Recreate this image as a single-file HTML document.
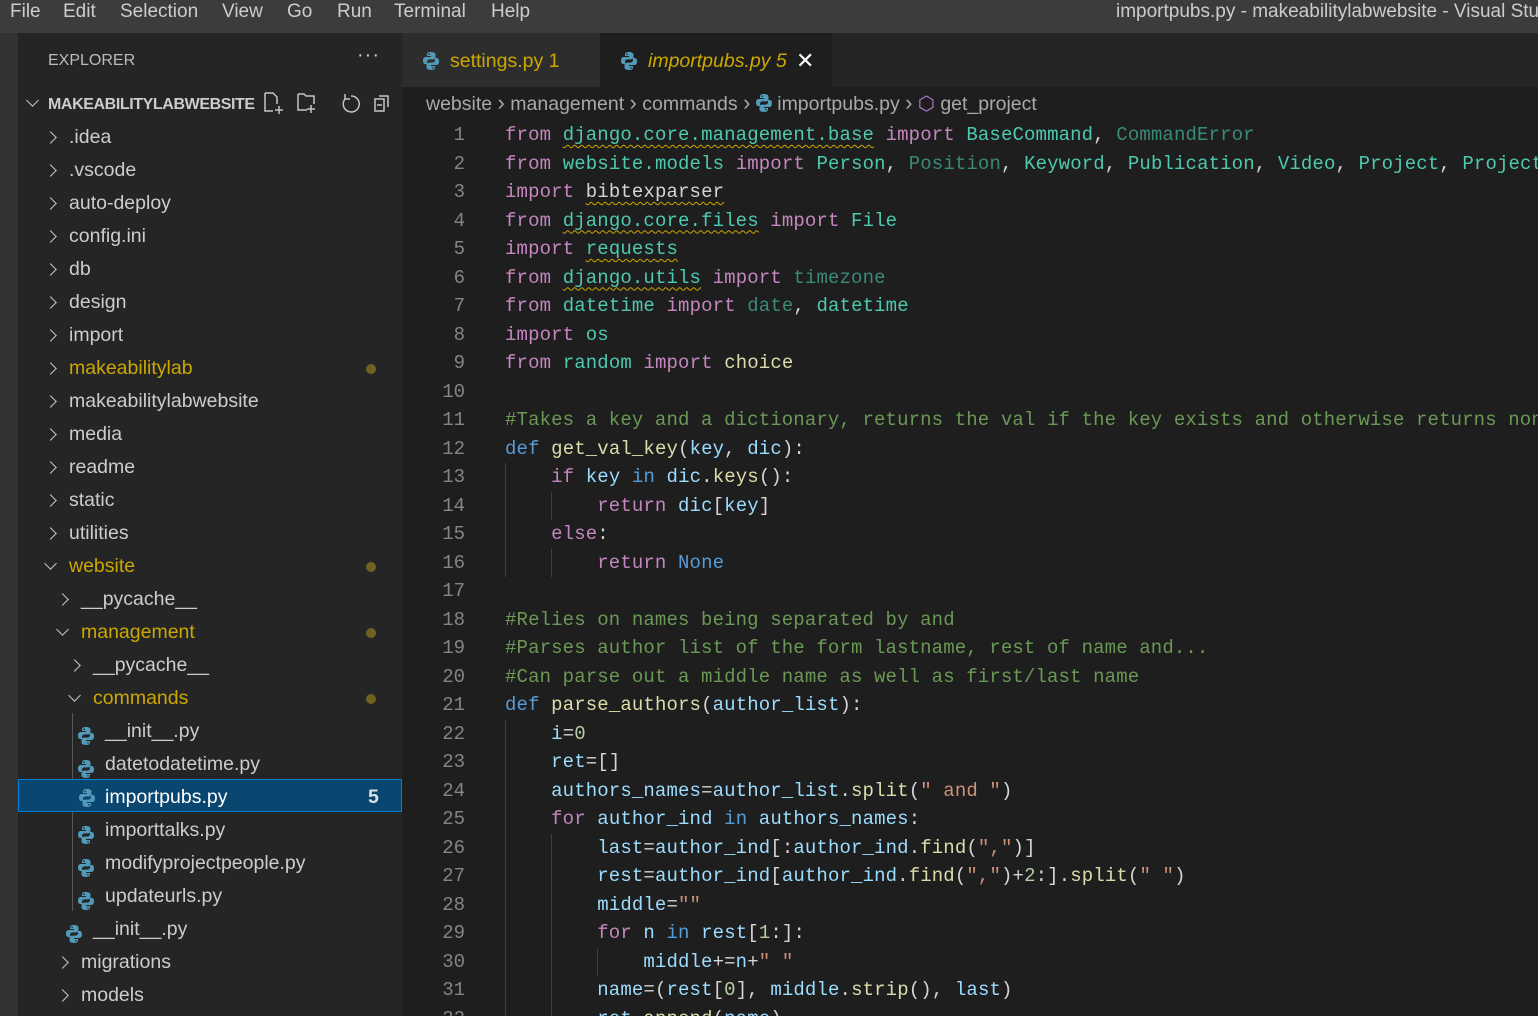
<!DOCTYPE html>
<html style="overflow:hidden;width:1538px;height:1016px"><head><meta charset="utf-8"><style>
*{margin:0;padding:0;box-sizing:border-box}
body{width:1538px;height:1016px;overflow:hidden;background:#1e1e1e;font-family:"Liberation Sans",sans-serif;position:relative}
.menu{position:absolute;left:0;top:0;width:1538px;height:33px;background:#3c3c3c;color:#ccc;font-size:19px;overflow:hidden}
.menu span{position:absolute;top:0;line-height:24px;white-space:nowrap}
.act{position:absolute;left:0;top:33px;width:18px;height:983px;background:#333}
.side{position:absolute;left:18px;top:33px;width:384px;height:983px;background:#252526;color:#ccc;overflow:hidden}
.row{position:absolute;left:0;width:384px;height:33px;line-height:33px;font-size:19.5px;white-space:nowrap}
.chev{position:absolute;top:12px;width:9px;height:9px;border-right:1.6px solid #c5c5c5;border-bottom:1.6px solid #c5c5c5;transform:rotate(-45deg)}
.chev.d{transform:rotate(45deg);top:9px}
.dot{position:absolute;left:348px;top:12px;width:10px;height:10px;border-radius:50%;background:#6f6220}
.y{color:#cca700}
.py{position:absolute;top:11px}
.tabs{position:absolute;left:402px;top:33px;width:1136px;height:54px;background:#252526;overflow:hidden}
.tab{position:absolute;top:0;height:54px;line-height:56px;font-size:19.5px;color:#cca700}
.crumb{position:absolute;left:426px;top:90px;font-size:19.5px;color:#a9a9a9;white-space:nowrap}
.code{position:absolute;left:0;top:121px;width:1538px;height:895px;overflow:hidden;font-family:"Liberation Mono",monospace;font-size:19px;letter-spacing:0.13px}
.ln{position:absolute;left:402px;width:63px;text-align:right;color:#858585;height:28.5px;line-height:28.5px;letter-spacing:0}
.cl{position:absolute;left:505px;height:28.5px;line-height:28.5px;white-space:pre;color:#d4d4d4}
.k{color:#c586c0}.m{color:#4ec9b0}.f{color:#dcdcaa}.v{color:#9cdcfe}.b{color:#569cd6}.c{color:#6a9955}.s{color:#ce9178}.n{color:#b5cea8}.u{color:#3a8a78}
.w{text-decoration:underline wavy #cca700;text-underline-offset:4px;text-decoration-thickness:1px}
.g{position:absolute;width:1px;background:#404040}
</style></head><body>
<div class="menu">
<span style="left:10px">File</span><span style="left:63px">Edit</span><span style="left:120px">Selection</span><span style="left:222px">View</span><span style="left:287px">Go</span><span style="left:337px">Run</span><span style="left:394px">Terminal</span><span style="left:491px">Help</span>
<span style="left:1116px">importpubs.py - makeabilitylabwebsite - Visual Studio Code</span>
</div>
<div class="act"></div>
<svg width="0" height="0" style="position:absolute"><defs><g id="pyi"><path d="M7.5 1c-3 0-3.5 1.3-3.5 2.6V5h4v1H2.6C1.2 6 0 7 0 9.6s1.1 3.4 2.5 3.4H4v-2c0-1.500 1.2-2.6 2.7-2.6h3.6c1.2 0 2.2-1 2.2-2.2V3.6C12.5 2 11 1 7.5 1z" fill="#519aba"/><path d="M8.5 19c3 0 3.5-1.3 3.5-2.6V15H8v-1h5.4c1.4 0 2.6-1 2.6-3.6S14.9 7 13.5 7H12v2c0 1.5-1.2 2.6-2.7 2.6H5.7c-1.2 0-2.200 1-2.2 2.2v2.6C3.5 18 5 19 8.5 19z" fill="#519aba"/><circle cx="6" cy="3.2" r=".8" fill="#252526"/><circle cx="10" cy="16.8" r=".8" fill="#252526"/></g></defs></svg>
<div class="side">
<div style="position:absolute;left:30px;top:19px;font-size:16px;color:#bbb">EXPLORER</div>
<div style="position:absolute;left:339px;top:11px;font-size:20px;color:#ccc;letter-spacing:1px">···</div>
<div class="row" style="top:55px;font-weight:bold;font-size:16px;letter-spacing:-0.4px"><span class="chev d" style="left:10px;top:8px"></span><span style="position:absolute;left:30px">MAKEABILITYLABWEBSITE</span>
<svg style="position:absolute;left:244px;top:3px" width="130" height="24" fill="none" stroke="#c5c5c5" stroke-width="1.5"><path d="M3 2h8l4 4v7M3 2v18h8M17 15v8M13 19h8"/><path d="M36 3h6l2 2h8v8M36 3v16h9M49 14v8M45 18h8"/><path d="M89 5a8 8 0 1 1-6 3M83 3v5h5"/><path d="M117 5h9v11M113 8h9v12h-9zM115 14h5"/></svg></div>
<div class="row" style="top:88px"><span class="chev" style="left:28px"></span><span style="position:absolute;left:51px">.idea</span></div>
<div class="row" style="top:121px"><span class="chev" style="left:28px"></span><span style="position:absolute;left:51px">.vscode</span></div>
<div class="row" style="top:154px"><span class="chev" style="left:28px"></span><span style="position:absolute;left:51px">auto-deploy</span></div>
<div class="row" style="top:187px"><span class="chev" style="left:28px"></span><span style="position:absolute;left:51px">config.ini</span></div>
<div class="row" style="top:220px"><span class="chev" style="left:28px"></span><span style="position:absolute;left:51px">db</span></div>
<div class="row" style="top:253px"><span class="chev" style="left:28px"></span><span style="position:absolute;left:51px">design</span></div>
<div class="row" style="top:286px"><span class="chev" style="left:28px"></span><span style="position:absolute;left:51px">import</span></div>
<div class="row y" style="top:319px"><span class="chev" style="left:28px"></span><span style="position:absolute;left:51px">makeabilitylab</span><span class="dot"></span></div>
<div class="row" style="top:352px"><span class="chev" style="left:28px"></span><span style="position:absolute;left:51px">makeabilitylabwebsite</span></div>
<div class="row" style="top:385px"><span class="chev" style="left:28px"></span><span style="position:absolute;left:51px">media</span></div>
<div class="row" style="top:418px"><span class="chev" style="left:28px"></span><span style="position:absolute;left:51px">readme</span></div>
<div class="row" style="top:451px"><span class="chev" style="left:28px"></span><span style="position:absolute;left:51px">static</span></div>
<div class="row" style="top:484px"><span class="chev" style="left:28px"></span><span style="position:absolute;left:51px">utilities</span></div>
<div class="row y" style="top:517px"><span class="chev d" style="left:28px"></span><span style="position:absolute;left:51px">website</span><span class="dot"></span></div>
<div class="row" style="top:550px"><span class="chev" style="left:40px"></span><span style="position:absolute;left:63px">__pycache__</span></div>
<div class="row y" style="top:583px"><span class="chev d" style="left:40px"></span><span style="position:absolute;left:63px">management</span><span class="dot"></span></div>
<div class="row" style="top:616px"><span class="chev" style="left:52px"></span><span style="position:absolute;left:75px">__pycache__</span></div>
<div class="row y" style="top:649px"><span class="chev d" style="left:52px"></span><span style="position:absolute;left:75px">commands</span><span class="dot"></span></div>
<div class="g" style="left:54px;top:680px;height:198px;background:#585858"></div>
<div class="row" style="top:682px"><svg class="py" style="left:60px" width="16" height="20"><use href="#pyi"/></svg><span style="position:absolute;left:87px">__init__.py</span></div>
<div class="row" style="top:715px"><svg class="py" style="left:60px" width="16" height="20"><use href="#pyi"/></svg><span style="position:absolute;left:87px">datetodatetime.py</span></div>
<div class="row" style="top:746px;background:#094771;border:1px solid #007fd4;color:#fff"><svg class="py" style="left:60px;top:8px" width="16" height="20"><use href="#pyi"/></svg><span style="position:absolute;left:86px;top:1px">importpubs.py</span><span style="position:absolute;left:349px;top:1px;font-weight:bold;color:#ddd">5</span></div>
<div class="row" style="top:781px"><svg class="py" style="left:60px" width="16" height="20"><use href="#pyi"/></svg><span style="position:absolute;left:87px">importtalks.py</span></div>
<div class="row" style="top:814px"><svg class="py" style="left:60px" width="16" height="20"><use href="#pyi"/></svg><span style="position:absolute;left:87px">modifyprojectpeople.py</span></div>
<div class="row" style="top:847px"><svg class="py" style="left:60px" width="16" height="20"><use href="#pyi"/></svg><span style="position:absolute;left:87px">updateurls.py</span></div>
<div class="row" style="top:880px"><svg class="py" style="left:48px" width="16" height="20"><use href="#pyi"/></svg><span style="position:absolute;left:75px">__init__.py</span></div>
<div class="row" style="top:913px"><span class="chev" style="left:40px"></span><span style="position:absolute;left:63px">migrations</span></div>
<div class="row" style="top:946px"><span class="chev" style="left:40px"></span><span style="position:absolute;left:63px">models</span></div>
</div>
<div class="tabs">
<div class="tab" style="left:0;width:198px;background:#2d2d2d"><svg style="position:absolute;left:21px;top:18px" width="16" height="20"><use href="#pyi"/></svg><span style="position:absolute;left:48px">settings.py 1</span></div>
<div class="tab" style="left:198px;width:232px;background:#1e1e1e;font-style:italic"><svg style="position:absolute;left:21px;top:18px" width="16" height="20"><use href="#pyi"/></svg><span style="position:absolute;left:48px">importpubs.py 5</span><span style="position:absolute;left:196px;font-style:normal;color:#fff;font-size:22px">✕</span></div>
</div>
<div class="crumb">website <span style="color:#aaa;font-size:22px">›</span> management <span style="color:#aaa;font-size:22px">›</span> commands <span style="color:#aaa;font-size:22px">›</span> <svg width="16" height="20" style="vertical-align:-3px"><use href="#pyi"/></svg> importpubs.py <span style="color:#aaa;font-size:22px">›</span> <span style="color:#b180d7">⬡</span> get_project</div>
<div class="g" style="left:505px;top:463px;height:114px"></div>
<div class="g" style="left:551px;top:492px;height:28px"></div>
<div class="g" style="left:551px;top:549px;height:28px"></div>
<div class="g" style="left:505px;top:720px;height:296px"></div>
<div class="g" style="left:551px;top:834px;height:182px"></div>
<div class="g" style="left:597px;top:948px;height:28px"></div>
<div class="code">
<div class="ln" style="top:0">1</div><div class="cl" style="top:0"><span class="k">from</span> <span class="m w">django.core.management.base</span> <span class="k">import</span> <span class="m">BaseCommand</span>, <span class="u">CommandError</span></div>
<div class="ln" style="top:28.5px">2</div><div class="cl" style="top:28.5px"><span class="k">from</span> <span class="m">website.models</span> <span class="k">import</span> <span class="m">Person</span>, <span class="u">Position</span>, <span class="m">Keyword</span>, <span class="m">Publication</span>, <span class="m">Video</span>, <span class="m">Project</span>, <span class="m">ProjectUmbrella</span></div>
<div class="ln" style="top:57px">3</div><div class="cl" style="top:57px"><span class="k">import</span> <span class="w">bibtexparser</span></div>
<div class="ln" style="top:85.5px">4</div><div class="cl" style="top:85.5px"><span class="k">from</span> <span class="m w">django.core.files</span> <span class="k">import</span> <span class="m">File</span></div>
<div class="ln" style="top:114px">5</div><div class="cl" style="top:114px"><span class="k">import</span> <span class="m w">requests</span></div>
<div class="ln" style="top:142.5px">6</div><div class="cl" style="top:142.5px"><span class="k">from</span> <span class="m w">django.utils</span> <span class="k">import</span> <span class="u">timezone</span></div>
<div class="ln" style="top:171px">7</div><div class="cl" style="top:171px"><span class="k">from</span> <span class="m">datetime</span> <span class="k">import</span> <span class="u">date</span>, <span class="m">datetime</span></div>
<div class="ln" style="top:199.5px">8</div><div class="cl" style="top:199.5px"><span class="k">import</span> <span class="m">os</span></div>
<div class="ln" style="top:228px">9</div><div class="cl" style="top:228px"><span class="k">from</span> <span class="m">random</span> <span class="k">import</span> <span class="f">choice</span></div>
<div class="ln" style="top:256.5px">10</div>
<div class="ln" style="top:285px">11</div><div class="cl c" style="top:285px">#Takes a key and a dictionary, returns the val if the key exists and otherwise returns none</div>
<div class="ln" style="top:313.5px">12</div><div class="cl" style="top:313.5px"><span class="b">def</span> <span class="f">get_val_key</span>(<span class="v">key</span>, <span class="v">dic</span>):</div>
<div class="ln" style="top:342px">13</div><div class="cl" style="top:342px">    <span class="k">if</span> <span class="v">key</span> <span class="b">in</span> <span class="v">dic</span>.<span class="f">keys</span>():</div>
<div class="ln" style="top:370.5px">14</div><div class="cl" style="top:370.5px">        <span class="k">return</span> <span class="v">dic</span>[<span class="v">key</span>]</div>
<div class="ln" style="top:399px">15</div><div class="cl" style="top:399px">    <span class="k">else</span>:</div>
<div class="ln" style="top:427.5px">16</div><div class="cl" style="top:427.5px">        <span class="k">return</span> <span class="b">None</span></div>
<div class="ln" style="top:456px">17</div>
<div class="ln" style="top:484.5px">18</div><div class="cl c" style="top:484.5px">#Relies on names being separated by and</div>
<div class="ln" style="top:513px">19</div><div class="cl c" style="top:513px">#Parses author list of the form lastname, rest of name and...</div>
<div class="ln" style="top:541.5px">20</div><div class="cl c" style="top:541.5px">#Can parse out a middle name as well as first/last name</div>
<div class="ln" style="top:570px">21</div><div class="cl" style="top:570px"><span class="b">def</span> <span class="f">parse_authors</span>(<span class="v">author_list</span>):</div>
<div class="ln" style="top:598.5px">22</div><div class="cl" style="top:598.5px">    <span class="v">i</span>=<span class="n">0</span></div>
<div class="ln" style="top:627px">23</div><div class="cl" style="top:627px">    <span class="v">ret</span>=[]</div>
<div class="ln" style="top:655.5px">24</div><div class="cl" style="top:655.5px">    <span class="v">authors_names</span>=<span class="v">author_list</span>.<span class="f">split</span>(<span class="s">" and "</span>)</div>
<div class="ln" style="top:684px">25</div><div class="cl" style="top:684px">    <span class="k">for</span> <span class="v">author_ind</span> <span class="b">in</span> <span class="v">authors_names</span>:</div>
<div class="ln" style="top:712.5px">26</div><div class="cl" style="top:712.5px">        <span class="v">last</span>=<span class="v">author_ind</span>[:<span class="v">author_ind</span>.<span class="f">find</span>(<span class="s">","</span>)]</div>
<div class="ln" style="top:741px">27</div><div class="cl" style="top:741px">        <span class="v">rest</span>=<span class="v">author_ind</span>[<span class="v">author_ind</span>.<span class="f">find</span>(<span class="s">","</span>)+<span class="n">2</span>:].<span class="f">split</span>(<span class="s">" "</span>)</div>
<div class="ln" style="top:769.5px">28</div><div class="cl" style="top:769.5px">        <span class="v">middle</span>=<span class="s">""</span></div>
<div class="ln" style="top:798px">29</div><div class="cl" style="top:798px">        <span class="k">for</span> <span class="v">n</span> <span class="b">in</span> <span class="v">rest</span>[<span class="n">1</span>:]:</div>
<div class="ln" style="top:826.5px">30</div><div class="cl" style="top:826.5px">            <span class="v">middle</span>+=<span class="v">n</span>+<span class="s">" "</span></div>
<div class="ln" style="top:855px">31</div><div class="cl" style="top:855px">        <span class="v">name</span>=(<span class="v">rest</span>[<span class="n">0</span>], <span class="v">middle</span>.<span class="f">strip</span>(), <span class="v">last</span>)</div>
<div class="ln" style="top:883.5px">32</div><div class="cl" style="top:883.5px">        <span class="v">ret</span>.<span class="f">append</span>(<span class="v">name</span>)</div>
</div>
</body></html>
